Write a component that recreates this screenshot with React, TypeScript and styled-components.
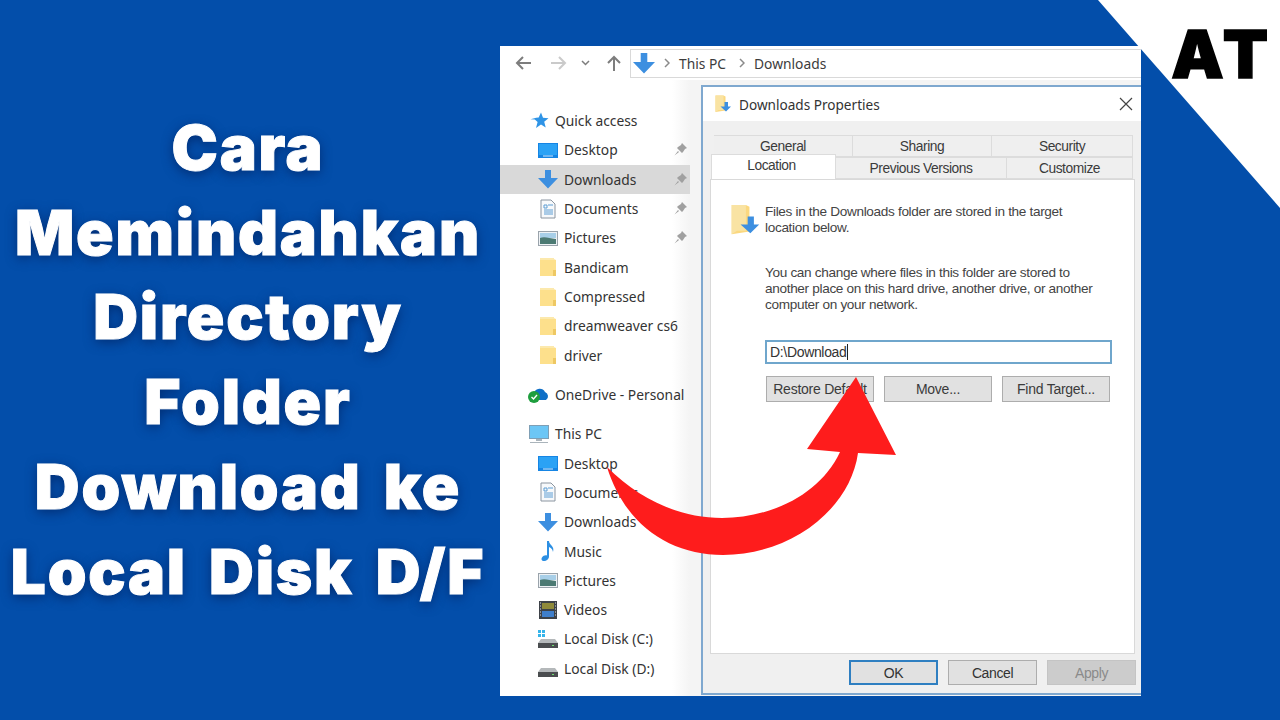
import React from "react";
import styled, { createGlobalStyle } from "styled-components";

const GlobalStyle = createGlobalStyle`
  html, body {
    margin: 0;
    padding: 0;
  }
  body {
    width: 1280px;
    height: 720px;
    overflow: hidden;
    font-family: "Noto Sans", "Liberation Sans", sans-serif;
  }
`;

const Page = styled.div`
  position: relative;
  display: flex;
  width: 1280px;
  height: 720px;
  overflow: hidden;
  box-sizing: border-box;
  padding: 46px 139px 24px 0;
  background: #034eaa;
`;

const Corner = styled.div`
  position: absolute;
  top: 0;
  right: 0;
  width: 182px;
  height: 208px;
  background: #fff;
  clip-path: polygon(0 0, 100% 0, 100% 100%);
`;

const Brand = styled.div`
  position: absolute;
  top: 15px;
  right: 7px;
  font-family: "Inter", "Liberation Sans", sans-serif;
  font-size: 66px;
  line-height: 78px;
  font-weight: 900;
  letter-spacing: 5px;
  color: #000;
  -webkit-text-stroke: 1.5px #000;
`;

const Headline = styled.h1`
  flex: 0 0 500px;
  box-sizing: border-box;
  margin: 60px 0 0;
  padding: 0 4px 0 0;
  font-family: "Inter", "Liberation Sans", sans-serif;
  font-size: 62px;
  line-height: 84.7px;
  font-weight: 900;
  letter-spacing: 1.8px;
  word-spacing: 8px;
  text-align: center;
  color: #fff;
  -webkit-text-stroke: 1px #fff;
  text-shadow: 0 3px 12px rgba(0, 30, 90, 0.7);
`;

const Explorer = styled.div`
  position: relative;
  display: flex;
  flex-direction: column;
  flex: 1;
  background: #fff;
`;

const NavBar = styled.div`
  display: flex;
  align-items: center;
  height: 34px;
  padding-left: 14px;
  box-sizing: border-box;
  color: #7d7d7d;
`;

const NavButton = styled.span<{ $w: number; $dim?: boolean; $ml?: number }>`
  display: flex;
  justify-content: center;
  width: ${(p) => p.$w}px;
  margin-left: ${(p) => p.$ml ?? 0}px;
  opacity: ${(p) => (p.$dim ? 0.4 : 1)};
`;

const AddressBar = styled.div`
  display: flex;
  align-items: center;
  flex: 1;
  height: 27px;
  margin-left: 7px;
  padding-left: 2px;
  border: 1px solid #d9d9d9;
  border-right: none;
  font-size: 13.8px;
  color: #3c3c3c;
`;

const Crumb = styled.span`
  margin-right: 4px;
`;

const Chevron = styled.span`
  display: flex;
  margin: 0 9px 0 9px;
  color: #8a8a8a;
`;

const Body = styled.div`
  display: flex;
  flex: 1;
  min-height: 0;
  background: #f4f4f4;
`;

const Sidebar = styled.ul`
  flex: 0 0 190px;
  margin: 0;
  padding: 26px 0 0;
  list-style: none;
  background: linear-gradient(90deg, #fff 172px, #f4f4f4 190px);
`;

const Row = styled.li<{ $level: number; $active?: boolean; $gap?: number }>`
  display: flex;
  align-items: center;
  height: 29.32px;
  margin-top: ${(p) => p.$gap ?? 0}px;
  padding-left: ${(p) => (p.$level === 0 ? 26 : 35)}px;
  background: ${(p) => (p.$active ? "#d9d9d9" : "transparent")};
  font-size: 13.8px;
  color: #333;
  white-space: nowrap;
`;

const RowIcon = styled.span`
  display: flex;
  justify-content: center;
  flex: 0 0 26px;
  margin-right: 3px;
`;

const RowLabel = styled.span`
  flex: 1;
`;

const Pin = styled.span`
  display: flex;
  margin-right: 3px;
`;

const Dialog = styled.section`
  display: flex;
  flex-direction: column;
  flex: 1;
  margin: 5px 0 1px 11px;
  border: 2px solid #7fa8cf;
  border-right: none;
  background: #f0f0f0;
  min-width: 0;
`;

const DialogTitle = styled.header`
  display: flex;
  align-items: center;
  height: 34px;
  padding: 0 8px 0 11px;
  background: #fff;
  font-size: 13.6px;
  color: #333;
`;

const TitleText = styled.span`
  flex: 1;
  margin-left: 7px;
`;

const CloseIcon = styled.span`
  display: flex;
`;

const Tabs = styled.div`
  display: flex;
  flex-direction: column;
  margin: 14px 7px 0 9px;
  padding-left: 2px;
`;

const TabLine = styled.div`
  display: flex;
`;

const Tab = styled.span<{ $w: number }>`
  display: flex;
  align-items: center;
  justify-content: center;
  box-sizing: border-box;
  width: ${(p) => p.$w}px;
  height: 22px;
  border: 1px solid #dcdcdc;
  border-left-width: 0;
  background: #efefef;
  font-family: "Liberation Sans", sans-serif;
  font-size: 13.8px;
  letter-spacing: -0.45px;
  color: #3b3b3b;
`;

const ActiveTab = styled(Tab)`
  height: 25px;
  margin: -3px 0 -1px -3px;
  padding: 0 4px 3px 0;
  position: relative;
  z-index: 1;
  border: 1px solid #dcdcdc;
  border-bottom: none;
  background: #fff;
`;

const TabPanel = styled.div`
  display: flex;
  flex-direction: column;
  flex: 1;
  margin: 0 6px 0 7px;
  padding: 24px 22px 0 18px;
  border: 1px solid #d9d9d9;
  background: #fff;
  font-family: "Liberation Sans", sans-serif;
  font-size: 13.6px;
  line-height: 16px;
  letter-spacing: -0.33px;
  color: #444;
`;

const InfoRow = styled.div`
  display: flex;
  gap: 4px;
  align-items: flex-start;
`;

const Indented = styled.p`
  margin: 29px 0 0 36px;
  width: 345px;
`;

const PathField = styled.div`
  display: flex;
  align-items: center;
  box-sizing: border-box;
  height: 24px;
  margin: 27px 0 0 36px;
  padding-left: 3px;
  border: 2px solid #6fa6cc;
  font-size: 14px;
  color: #333;
`;

const Caret = styled.span`
  width: 1px;
  height: 16px;
  background: #222;
`;

const ButtonRow = styled.div`
  display: flex;
  justify-content: space-between;
  margin: 12px 2px 0 37px;
`;

const PanelButton = styled.span`
  display: flex;
  align-items: center;
  justify-content: center;
  box-sizing: border-box;
  width: 108px;
  height: 26px;
  border: 1px solid #adadad;
  background: #e1e1e1;
  font-size: 14px;
  letter-spacing: -0.25px;
  color: #3b3b3b;
`;

const Footer = styled.footer`
  display: flex;
  justify-content: flex-end;
  gap: 10px;
  height: 39px;
  padding: 6px 5px 0 0;
  box-sizing: border-box;
  font-family: "Liberation Sans", sans-serif;
  font-size: 14px;
  letter-spacing: -0.4px;
`;

const FooterButton = styled.span<{ $kind?: "default" | "disabled" }>`
  display: flex;
  align-items: center;
  justify-content: center;
  box-sizing: border-box;
  width: 89px;
  height: 25px;
  border: ${(p) => (p.$kind === "default" ? "2px solid #2f7fc1" : "1px solid #adadad")};
  border-color: ${(p) => (p.$kind === "disabled" ? "#c4c4c4" : undefined)};
  background: ${(p) => (p.$kind === "disabled" ? "#cccccc" : "#e1e1e1")};
  color: ${(p) => (p.$kind === "disabled" ? "#8a8a8a" : "#333")};
`;

const ArrowOverlay = styled.svg`
  position: absolute;
  top: 0;
  left: 0;
  pointer-events: none;
`;

const Arrow = ({ size = 20 }: { size?: number }) => (
  <svg width={size} height={size} viewBox="0 0 20 20">
    <path d="M7 1h6v8h7L10 19.500 0 9h7z" fill="#3d8fe0" />
  </svg>
);

const Folder = () => (
  <svg width="20" height="20" viewBox="0 0 20 20">
    <path d="M2 1h11l5 2v16H2z" fill="#fde08c" />
    <path d="M15 13h3v6h-3z" fill="#eec863" />
    <path d="M2 1h14v2H2z" fill="#fce9ad" />
  </svg>
);

const Desktop = () => (
  <svg width="20" height="20" viewBox="0 0 20 20">
    <rect x="0" y="3" width="20" height="15" fill="#1685e4" />
    <rect x="1" y="4" width="18" height="11" fill="#2ba2f5" />
    <rect x="5" y="15.500" width="10" height="1" fill="#cfe9fb" />
  </svg>
);

const Documents = () => (
  <svg width="20" height="20" viewBox="0 0 20 20">
    <path d="M3 1h10l4 4v14H3z" fill="#f7f9fb" stroke="#8b95a0" />
    <path d="M6 6h3v3H6zM10 6h5M6 11h9M6 13h9M6 15h9" stroke="#5d9dd3" fill="none" />
  </svg>
);

const Pictures = () => (
  <svg width="20" height="20" viewBox="0 0 20 20">
    <rect x="0.500" y="3.500" width="19" height="14" fill="#eef2f5" stroke="#9aa3ab" />
    <rect x="2" y="5" width="16" height="5" fill="#a8cfe8" />
    <path d="M2 10c4-2 9 0 16 1v5H2z" fill="#4c7a73" />
  </svg>
);

const Music = () => (
  <svg width="20" height="20" viewBox="0 0 20 20">
    <path d="M9 0h2c0 4 6 5 4 11-.5-3-2-4-4-5v9.500C11 18 8.500 20 6 20s-3-2-2-3.500S7 14 9 14.500z" fill="#2c8fe3" />
  </svg>
);

const Videos = () => (
  <svg width="20" height="20" viewBox="0 0 20 20">
    <rect x="1" y="1" width="18" height="18" fill="#3d4248" />
    <rect x="4" y="3" width="12" height="6" fill="#8f8a3a" />
    <rect x="4" y="11" width="12" height="6" fill="#3f7fcb" />
    <path d="M2 3h1M2 6h1M2 9h1M2 12h1M2 15h1M17 3h1M17 6h1M17 9h1M17 12h1M17 15h1" stroke="#ddd" />
  </svg>
);

const Drive = ({ system }: { system?: boolean }) => (
  <svg width="20" height="20" viewBox="0 0 20 20">
    {system && <path d="M0 1h3v3H0zM4 1h3v3H4zM0 5h3v3H0zM4 5h3v3H4z" fill="#35b4ea" />}
    <path d="M3 10h14l3 4H0z" fill="#b4b8ba" />
    <rect x="0" y="14" width="20" height="5" fill="#4a4d4f" />
    <rect x="14" y="16" width="2" height="1" fill="#6fe06f" />
  </svg>
);

const Star = () => (
  <svg width="20" height="20" viewBox="0 0 20 20">
    <path d="M12 1.500l2 5.300 5.500.4-4.300 3.600 1.500 5.700-4.700-3-5 3.500 1.600-6-2.800-2.500-4.300-.3 5.700-1.400 2.500-.3z" fill="#2f94e6" />
  </svg>
);

const OneDrive = () => (
  <svg width="22" height="20" viewBox="0 0 22 20">
    <path d="M6 9a6 6 0 0 1 11-1 4.500 4.500 0 0 1 1 8H6z" fill="#0f6fc6" />
    <circle cx="6" cy="13" r="6" fill="#1e9e3e" />
    <path d="M3.500 13l2 2 3.500-4" stroke="#fff" strokeWidth="1.400" fill="none" />
  </svg>
);

const Monitor = () => (
  <svg width="20" height="20" viewBox="0 0 20 20">
    <rect x="0.500" y="1.500" width="19" height="13" fill="#6cc6f5" stroke="#7f9fb5" />
    <path d="M7 15h6v2H7zM1 18h18v1H1z" fill="#aab4bb" />
  </svg>
);

const PinIcon = () => (
  <svg width="13" height="13" viewBox="0 0 13 13">
    <path d="M8 0l5 5-2 1-2 3-1 1-5-5 1-1 3-2zM4 8l-3.500 4.500L5 9z" fill="#a0a0a0" />
  </svg>
);

const DialogFolder = ({ size }: { size: number }) => (
  <svg width={size} height={size} viewBox="0 0 32 36">
    <path d="M1 1h16l4 2v28L1 34z" fill="#fbd87f" />
    <path d="M1 1h16v29H7L1 34z" fill="#f9e3a3" />
    <path d="M19 14h7v9h6L22 33 11 23h8z" fill="#3d8fe0" />
  </svg>
);

const Chev = () => (
  <svg width="6" height="10" viewBox="0 0 6 10">
    <path d="M1 1l4 4-4 4" fill="none" stroke="currentColor" strokeWidth="1.500" />
  </svg>
);

type Entry = {
  label: string;
  icon: React.ReactNode;
  level: number;
  pinned?: boolean;
  active?: boolean;
  gap?: number;
};

const entries: Entry[] = [
  { label: "Quick access", icon: <Star />, level: 0 },
  { label: "Desktop", icon: <Desktop />, level: 1, pinned: true },
  { label: "Downloads", icon: <Arrow />, level: 1, pinned: true, active: true },
  { label: "Documents", icon: <Documents />, level: 1, pinned: true },
  { label: "Pictures", icon: <Pictures />, level: 1, pinned: true },
  { label: "Bandicam", icon: <Folder />, level: 1 },
  { label: "Compressed", icon: <Folder />, level: 1 },
  { label: "dreamweaver cs6", icon: <Folder />, level: 1 },
  { label: "driver", icon: <Folder />, level: 1 },
  { label: "OneDrive - Personal", icon: <OneDrive />, level: 0, gap: 10 },
  { label: "This PC", icon: <Monitor />, level: 0, gap: 10 },
  { label: "Desktop", icon: <Desktop />, level: 1 },
  { label: "Documents", icon: <Documents />, level: 1 },
  { label: "Downloads", icon: <Arrow />, level: 1 },
  { label: "Music", icon: <Music />, level: 1 },
  { label: "Pictures", icon: <Pictures />, level: 1 },
  { label: "Videos", icon: <Videos />, level: 1 },
  { label: "Local Disk (C:)", icon: <Drive system />, level: 1 },
  { label: "Local Disk (D:)", icon: <Drive />, level: 1 },
];

const App: React.FC = () => (
  <Page>
    <GlobalStyle />
    <Corner />
    <Brand>AT</Brand>
    <Headline>
      Cara
      <br />
      Memindahkan
      <br />
      Directory
      <br />
      Folder
      <br />
      Download ke
      <br />
      Local Disk D/F
    </Headline>
    <Explorer>
      <NavBar>
        <NavButton $w={18}>
          <svg width="16" height="14" viewBox="0 0 16 14">
            <path d="M8 1L2 7l6 6M2 7h14" fill="none" stroke="currentColor" strokeWidth="2" />
          </svg>
        </NavButton>
        <NavButton $w={18} $dim $ml={18}>
          <svg width="16" height="14" viewBox="0 0 16 14">
            <path d="M8 1l6 6-6 6M14 7H0" fill="none" stroke="currentColor" strokeWidth="2" />
          </svg>
        </NavButton>
        <NavButton $w={10} $ml={12}>
          <svg width="9" height="6" viewBox="0 0 9 6">
            <path d="M1 1l3.500 3.500L8 1" fill="none" stroke="currentColor" strokeWidth="1.500" />
          </svg>
        </NavButton>
        <NavButton $w={18} $ml={15}>
          <svg width="14" height="16" viewBox="0 0 14 16">
            <path d="M1 8l6-6 6 6M7 2v14" fill="none" stroke="currentColor" strokeWidth="2" />
          </svg>
        </NavButton>
        <AddressBar>
          <Arrow size={22} />
          <Chevron>
            <Chev />
          </Chevron>
          <Crumb>This PC</Crumb>
          <Chevron>
            <Chev />
          </Chevron>
          <Crumb>Downloads</Crumb>
        </AddressBar>
      </NavBar>
      <Body>
        <Sidebar>
          {entries.map((e, i) => (
            <Row key={i} $level={e.level} $active={e.active} $gap={e.gap}>
              <RowIcon>{e.icon}</RowIcon>
              <RowLabel>{e.label}</RowLabel>
              {e.pinned && (
                <Pin>
                  <PinIcon />
                </Pin>
              )}
            </Row>
          ))}
        </Sidebar>
        <Dialog>
          <DialogTitle>
            <DialogFolder size={18} />
            <TitleText>Downloads Properties</TitleText>
            <CloseIcon>
              <svg width="14" height="14" viewBox="0 0 14 14">
                <path d="M1 1l12 12M13 1L1 13" stroke="#444" strokeWidth="1.200" />
              </svg>
            </CloseIcon>
          </DialogTitle>
          <Tabs>
            <TabLine>
              <Tab $w={139}>General</Tab>
              <Tab $w={139}>Sharing</Tab>
              <Tab $w={141}>Security</Tab>
            </TabLine>
            <TabLine>
              <ActiveTab $w={125}>Location</ActiveTab>
              <Tab $w={171}>Previous Versions</Tab>
              <Tab $w={126}>Customize</Tab>
            </TabLine>
          </Tabs>
          <TabPanel>
            <InfoRow>
              <DialogFolder size={32} />
              <div>
                Files in the Downloads folder are stored in the target
                <br />
                location below.
              </div>
            </InfoRow>
            <Indented>
              You can change where files in this folder are stored to another place on this hard drive, another drive,
              or another computer on your network.
            </Indented>
            <PathField>
              D:\Download
              <Caret />
            </PathField>
            <ButtonRow>
              <PanelButton>Restore Default</PanelButton>
              <PanelButton>Move...</PanelButton>
              <PanelButton>Find Target...</PanelButton>
            </ButtonRow>
          </TabPanel>
          <Footer>
            <FooterButton $kind="default">OK</FooterButton>
            <FooterButton>Cancel</FooterButton>
            <FooterButton $kind="disabled">Apply</FooterButton>
          </Footer>
        </Dialog>
      </Body>
    </Explorer>
    <ArrowOverlay width="1280" height="720" viewBox="0 0 1280 720">
      <path
        d="M607 467C640 500 680 518 722 518C770 518 820 495 840 452L807 449L856 377L896 455L858 453C850 510 790 555 723 555C670 555 625 525 607 467Z"
        fill="#fe1c1c"
      />
    </ArrowOverlay>
  </Page>
);

export default App;
